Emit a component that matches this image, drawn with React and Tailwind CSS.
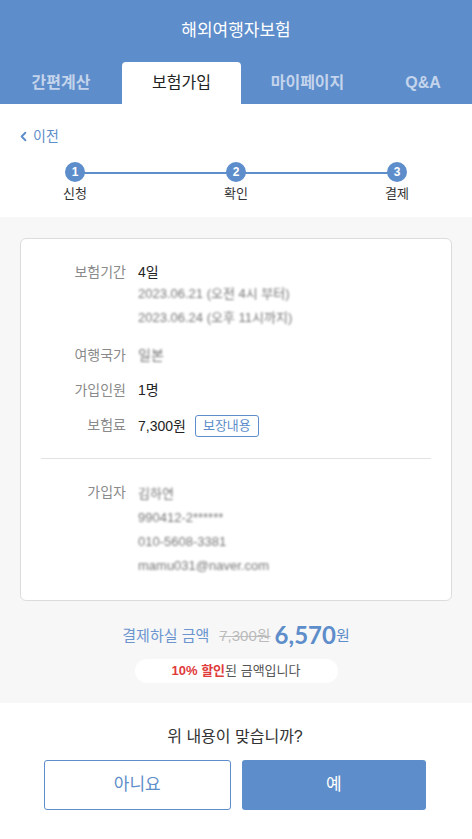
import { ChevronLeft } from 'lucide-react';

const FONT = { fontFamily: '"Liberation Sans", "Noto Sans CJK KR", sans-serif' };

const STEPS = ['신청', '확인', '결제'];

function Row({ label, children }) {
  return (
    <div className="flex items-start">
      <span className="w-[85px] text-right text-[14px] leading-[20px] text-[#8a8a8a]">{label}</span>
      <div className="ml-[12px] flex-1 text-[14px] leading-[20px] text-[#222]">{children}</div>
    </div>
  );
}

function Blur({ children }) {
  return <div className="blur-[1.2px] text-[13px] leading-[24px] text-[#777]">{children}</div>;
}

export default function App() {
  return (
    <div style={FONT} className="w-[472px] min-h-[839px] bg-white">
      <header className="bg-[#5d8dca]">
        <h1 className="pt-[19px] pb-[14px] text-center text-[17px] leading-[24px] text-white">해외여행자보험</h1>
        <nav className="flex h-[47px] items-end pt-[5px]">
          <span className="flex h-[42px] w-[122px] items-center justify-center text-[16px] font-bold text-[#c3d4ec]">간편계산</span>
          <span className="flex h-[42px] w-[119px] items-center justify-center rounded-t-[4px] bg-white text-[16px] text-[#222]">보험가입</span>
          <span className="flex h-[42px] w-[133px] items-center justify-center text-[16px] font-bold text-[#c3d4ec]">마이페이지</span>
          <span className="flex h-[42px] flex-1 items-center justify-center text-[16px] font-bold text-[#c3d4ec]">Q&amp;A</span>
        </nav>
      </header>

      <section className="px-[16px] pt-[22px] pb-[14px]">
        <a className="flex items-center gap-[2px] text-[14px] leading-[20px] text-[#5d8dca]">
          <ChevronLeft size={15} strokeWidth={3} />
          <span>이전</span>
        </a>
        <div className="relative mx-[49px] mt-[16px]">
          <div className="absolute left-[10px] right-[10px] top-[10px] h-[1.5px] bg-[#5d8dca]" />
          <div className="relative flex justify-between">
            {STEPS.map((step, i) => (
              <div key={step} className="flex w-[20px] flex-col items-center">
                <span className="flex h-[20px] w-[20px] items-center justify-center rounded-full bg-[#5d8dca] text-[12px] font-bold text-white">
                  {i + 1}
                </span>
                <span className="mt-[3px] whitespace-nowrap text-[13px] leading-[18px] text-[#333]">{step}</span>
              </div>
            ))}
          </div>
        </div>
      </section>

      <main className="bg-[#f7f7f7] px-[20px] pt-[21px] pb-[20px]">
        <div className="rounded-[6px] border border-[#dcdcdc] bg-white px-[20px] pt-[23px] pb-[22px]">
          <div className="flex flex-col gap-[15px]">
            <Row label="보험기간">
              <div className="leading-[20px]">4일</div>
              <Blur>2023.06.21 (오전 4시 부터)</Blur>
              <Blur>2023.06.24 (오후 11시까지)</Blur>
            </Row>
            <Row label="여행국가">
              <span className="blur-[1.2px] text-[#777]">일본</span>
            </Row>
            <Row label="가입인원">1명</Row>
            <Row label="보험료">
              <div className="flex items-center">
                <span>7,300원</span>
                <span className="ml-[9px] rounded-[3px] border border-[#5d8dca] px-[7px] text-[13px] leading-[20px] text-[#5d8dca]">보장내용</span>
              </div>
            </Row>
          </div>
          <div className="mt-[21px] h-px bg-[#e2e2e2]" />
          <div className="mt-[23px]">
            <Row label="가입자">
              <Blur>김하연</Blur>
              <Blur>990412-2******</Blur>
              <Blur>010-5608-3381</Blur>
              <Blur>mamu031@naver.com</Blur>
            </Row>
          </div>
        </div>

        <div className="mt-[20px] flex items-end justify-center">
          <span className="mb-[3px] text-[15px] leading-[20px] text-[#6b95cf]">결제하실 금액</span>
          <span className="mb-[3px] ml-[10px] text-[15px] leading-[20px] text-[#bbb] line-through">7,300원</span>
          <span className="ml-[4px] text-[24px] font-bold leading-[28px] text-[#5d8dca]" style={{ fontFamily: 'Lato, "Noto Sans CJK KR", sans-serif' }}>6,570</span>
          <span className="mb-[3px] text-[15px] leading-[20px] text-[#5d8dca]">원</span>
        </div>
        <div className="mx-auto mt-[10px] flex h-[24px] w-[203px] items-center justify-center rounded-full bg-white text-[13px] text-[#555]">
          <span className="font-bold text-[#e03a3a]">10% 할인</span>
          <span>된 금액입니다</span>
        </div>
      </main>

      <footer className="pl-[44px] pr-[46px] pt-[24px] pb-[30px]">
        <p className="text-center text-[16px] leading-[20px] text-[#333]">위 내용이 맞습니까?</p>
        <div className="mt-[13px] flex gap-[11px]">
          <button className="h-[50px] flex-1 rounded-[3px] border border-[#5d8dca] bg-white text-[17px] text-[#5d8dca]">아니요</button>
          <button className="h-[50px] flex-1 rounded-[3px] bg-[#5d8dca] text-[17px] text-white">예</button>
        </div>
      </footer>
    </div>
  );
}
